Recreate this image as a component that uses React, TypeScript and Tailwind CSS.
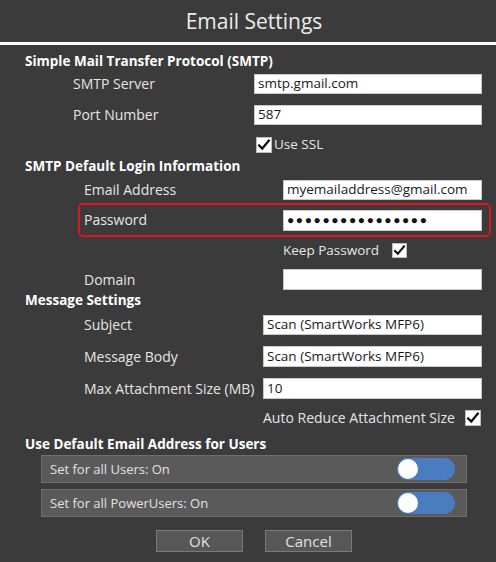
import React from "react";

function Check({ size = 16 }: { size?: number }) {
  return (
    <span
      className="inline-flex items-center justify-center bg-white border border-[#bdbdbd] shrink-0"
      style={{ width: size, height: size }}
    >
      <svg viewBox="0 0 16 16" className="w-full h-full">
        <path d="M2.5 8.5 L6 12 L13.5 3" fill="none" stroke="#111" strokeWidth="2.6" strokeLinecap="square" />
      </svg>
    </span>
  );
}

function Field({ value, w, h = 20 }: { value: string; w: string; h?: number }) {
  return (
    <div
      className={`${w} bg-white border border-[#c8c8c8] text-[#1a1a1a] text-[13.5px] pl-[3px] flex items-center leading-none whitespace-nowrap overflow-hidden shrink-0`}
      style={{ height: h }}
    >
      {value}
    </div>
  );
}

function Heading({ children, className = "" }: { children: React.ReactNode; className?: string }) {
  return (
    <div className={`h-[20px] leading-[20px] pl-[25px] text-[13.5px] font-bold text-white whitespace-nowrap ${className}`}>
      {children}
    </div>
  );
}

function Toggle() {
  return (
    <div className="w-[58px] h-[22px] rounded-full bg-[#4a7dc0] flex items-center px-[1px]">
      <div className="w-[20px] h-[20px] rounded-full bg-white" />
    </div>
  );
}

function UserRow({ label, className = "" }: { label: string; className?: string }) {
  return (
    <div
      className={`ml-[41px] w-[426px] h-[28px] bg-[#5a5a5a] border border-[#6e6e6e] flex items-center justify-between pl-[8px] pr-[11px] text-[13px] leading-none text-[#e2e2e2] ${className}`}
    >
      <span>{label}</span>
      <Toggle />
    </div>
  );
}

export default function App() {
  return (
    <div className="w-[496px] h-[562px] bg-[#3b3b3b] text-[#e6e6e6] font-['Open_Sans','Noto_Sans',sans-serif] overflow-hidden leading-none">
      <div className="h-[42px] flex items-center justify-center pl-[12px] text-[21px] text-[#ececec]">
        Email Settings
      </div>
      <div className="h-[3px] bg-white" />

      <Heading className="mt-[6px]">Simple Mail Transfer Protocol (SMTP)</Heading>
      <div className="mt-[3px] h-[20px] flex items-center text-[14px]">
        <span className="w-[254px] pl-[73px]">SMTP Server</span>
        <Field value="smtp.gmail.com" w="w-[228px]" />
      </div>
      <div className="mt-[11px] h-[20px] flex items-center text-[14px]">
        <span className="w-[254px] pl-[73px]">Port Number</span>
        <Field value="587" w="w-[228px]" />
      </div>
      <div className="mt-[12px] h-[16px] pl-[256px] flex items-center gap-[2px] text-[13.5px]">
        <Check size={16} />
        <span>Use SSL</span>
      </div>

      <Heading className="mt-[3px]">SMTP Default Login Information</Heading>
      <div className="mt-[4px] h-[20px] flex items-center text-[14px]">
        <span className="w-[283px] pl-[84px]">Email Address</span>
        <Field value="myemailaddress@gmail.com" w="w-[199px]" />
      </div>
      <div className="mt-[3px] ml-[78px] w-[413px] h-[34px] border-2 border-[#e0141a] rounded-[5px] flex items-center text-[14px]">
        <span className="w-[203px] pl-[4px]">Password</span>
        <div className="w-[199px] h-[21px] bg-white border border-[#c8c8c8] text-[#111] text-[12px] pl-[3px] flex items-center tracking-[1.6px] leading-none">
          ●●●●●●●●●●●●●●●●
        </div>
      </div>
      <div className="mt-[6px] h-[15px] pl-[283px] flex items-center text-[13.5px]">
        <span className="w-[109px] whitespace-nowrap">Keep Password</span>
        <Check size={15} />
      </div>
      <div className="mt-[11px] h-[21px] flex items-center text-[14px]">
        <span className="w-[283px] pl-[84px]">Domain</span>
        <Field value="" w="w-[199px]" h={21} />
      </div>

      <Heading>Message Settings</Heading>
      <div className="mt-[5px] h-[20px] flex items-center text-[14px]">
        <span className="w-[263px] pl-[84px]">Subject</span>
        <Field value="Scan (SmartWorks MFP6)" w="w-[219px]" />
      </div>
      <div className="mt-[11px] h-[21px] flex items-center text-[14px]">
        <span className="w-[263px] pl-[84px]">Message Body</span>
        <Field value="Scan (SmartWorks MFP6)" w="w-[219px]" h={21} />
      </div>
      <div className="mt-[11px] h-[21px] flex items-center text-[14px]">
        <span className="w-[263px] pl-[84px] whitespace-nowrap">Max Attachment Size (MB)</span>
        <Field value="10" w="w-[219px]" h={21} />
      </div>
      <div className="mt-[11px] h-[16px] pl-[263px] w-[481px] flex items-center justify-between text-[14px]">
        <span className="whitespace-nowrap">Auto Reduce Attachment Size</span>
        <Check size={16} />
      </div>

      <Heading className="mt-[8px]">Use Default Email Address for Users</Heading>
      <UserRow label="Set for all Users: On" className="mt-[1px]" />
      <UserRow label="Set for all PowerUsers: On" className="mt-[6px]" />

      <div className="mt-[13px] flex justify-center pl-[12px] gap-[22px]">
        <button className="w-[87px] h-[22px] bg-[#575757] border border-[#7a7a7a] text-[15px] leading-none text-[#e0e0e0]">
          OK
        </button>
        <button className="w-[87px] h-[22px] bg-[#575757] border border-[#7a7a7a] text-[15px] leading-none text-[#e0e0e0]">
          Cancel
        </button>
      </div>
    </div>
  );
}
